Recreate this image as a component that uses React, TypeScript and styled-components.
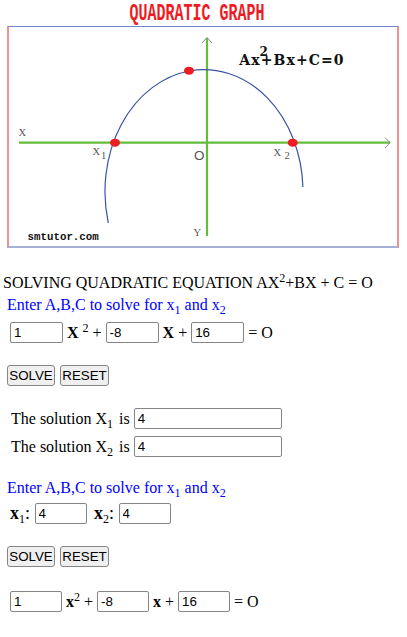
import React, { FC } from "react";
import styled, { createGlobalStyle } from "styled-components";

const GlobalStyle = createGlobalStyle`
  html, body {
    margin: 0;
    padding: 0;
    background: #fff;
  }
  body {
    font-family: "Liberation Serif", "Times New Roman", serif;
    font-size: 16px;
    color: #000;
  }
`;

const Page = styled.div`
  width: 407px;
  display: flex;
  flex-direction: column;
  align-items: flex-start;
`;

const Title = styled.div`
  width: 394px;
  height: 26px;
  display: flex;
  justify-content: center;
  align-items: center;
  font-family: "Liberation Mono", "Courier New", monospace;
  font-weight: bold;
  font-size: 15px;
  color: #ee1c24;
  span {
    display: inline-block;
    line-height: 9px;
    transform: translateY(0.5px) scale(1, 1.6);
    transform-origin: center center;
  }
`;

const GraphFrame = styled.div`
  margin-left: 7px;
  width: 392px;
  height: 222px;
  box-sizing: border-box;
  border-top: 1px solid #6f87c9;
  border-bottom: 2px solid #a3b1d6;
  border-left: 2px solid #f39090;
  border-right: 2px solid #f39090;
  svg {
    display: block;
  }
`;

const Heading = styled.div<{ $top: number }>`
  margin-top: ${(p) => p.$top}px;
  padding-left: 3px;
  line-height: 20px;
  white-space: nowrap;
`;

const Prompt = styled.div<{ $top: number }>`
  margin-top: ${(p) => p.$top}px;
  padding-left: 7px;
  line-height: 20px;
  color: #0000ff;
  white-space: nowrap;
`;

const Row = styled.div<{ $top: number; $left: number; $size?: number }>`
  margin-top: ${(p) => p.$top}px;
  padding-left: ${(p) => p.$left}px;
  height: 21px;
  line-height: 21px;
  font-size: ${(p) => p.$size ?? 16}px;
  white-space: nowrap;
`;

const Sup = styled.sup`
  font-size: 12px;
  line-height: 0;
  vertical-align: 6px;
`;

const Sub = styled.sub<{ $after?: number }>`
  font-size: 12px;
  line-height: 0;
  vertical-align: -4px;
  margin-right: ${(p) => p.$after ?? 0}px;
`;

const Var = styled.b<{ $before?: number }>`
  margin-left: ${(p) => p.$before ?? 0}px;
`;

const Field = styled.input<{ $w: number }>`
  width: ${(p) => p.$w}px;
  height: 21px;
  box-sizing: border-box;
  margin: 0;
  padding: 0 3px;
  vertical-align: top;
  border: 1px solid #858585;
  border-radius: 2px;
  font-family: "Liberation Sans", Arial, sans-serif;
  font-size: 13.33px;
  color: #000;
  background: #fff;
`;

const Buttons = styled.div<{ $top: number }>`
  margin-top: ${(p) => p.$top}px;
  padding-left: 7px;
  display: flex;
  gap: 5px;
`;

const Button = styled.button<{ $w: number }>`
  width: ${(p) => p.$w}px;
  height: 21px;
  padding: 0;
  margin: 0;
  box-sizing: border-box;
  border: 1px solid #858585;
  border-radius: 3px;
  background: #efefef;
  font-family: "Liberation Sans", Arial, sans-serif;
  font-size: 13.33px;
  color: #000;
`;

const Graph: FC = () => (
  <svg width={388} height={219} viewBox="9 27 388 219">
    <line x1={19} y1={142.7} x2={390} y2={142.7} stroke="#64bc3c" strokeWidth={2.2} />
    <line x1={207} y1={38} x2={207} y2={236} stroke="#64bc3c" strokeWidth={2.2} />
    <polyline points="385,137.5 390,142.7 385,148" fill="none" stroke="#8a8a8a" strokeWidth={1} />
    <polyline points="202,43 207,37.5 212,43" fill="none" stroke="#8a8a8a" strokeWidth={1} />
    <path d="M108.3 223 A99 122 0 1 1 302.9 187" fill="none" stroke="#3853a4" strokeWidth={1.2} />
    <ellipse cx={189} cy={70.7} rx={5} ry={4} fill="#ee1c24" />
    <ellipse cx={115} cy={142.7} rx={5} ry={4} fill="#ee1c24" />
    <ellipse cx={292.7} cy={142.7} rx={5} ry={4} fill="#ee1c24" />
    <g fontFamily="'Liberation Serif', serif" fontSize={10.5} fill="#555">
      <text x={18.5} y={136}>X</text>
      <text x={92.5} y={154.5}>X</text>
      <text x={101} y={158.5}>1</text>
      <text x={273.5} y={155.5}>X</text>
      <text x={284.5} y={159}>2</text>
      <text x={193.5} y={235.5}>Y</text>
    </g>
    <text x={194} y={159.5} fontFamily="'Liberation Sans', Arial, sans-serif" fontSize={13.5} fill="#555">O</text>
    <text x={27.5} y={240} fontFamily="'Liberation Mono', monospace" fontWeight="bold" fontSize={10.8} fill="#111">smtutor.com</text>
    <g fontFamily="'DejaVu Serif', serif" fontWeight="bold" fill="#111">
      <text x={239.3} y={64.7} fontSize={14} letterSpacing={1.1}>Ax+Bx+C=0</text>
      <text x={259.5} y={55.5} fontSize={12}>2</text>
    </g>
  </svg>
);

const App: FC = () => (
  <Page>
    <GlobalStyle />
    <Title>
      <span>QUADRATIC GRAPH</span>
    </Title>
    <GraphFrame>
      <Graph />
    </GraphFrame>

    <Heading $top={24.6}>
      SOLVING QUADRATIC EQUATION AX<Sup>2</Sup>+BX + C = O
    </Heading>
    <Prompt $top={2}>
      Enter A,B,C to solve for x<Sub>1</Sub> and x<Sub>2</Sub>
    </Prompt>
    <Row $top={7.4} $left={10}>
      <Field $w={53} defaultValue="1" /> <b>X</b> <Sup>2</Sup> +{" "}
      <Field $w={53} defaultValue="-8" /> <b>X</b> +{" "}
      <Field $w={53} defaultValue="16" />
      {" "}= O
    </Row>
    <Buttons $top={22}>
      <Button $w={48}>SOLVE</Button>
      <Button $w={49}>RESET</Button>
    </Buttons>
    <Row $top={22} $left={11}>
      The solution X<Sub $after={2}>1</Sub> is <Field $w={148} defaultValue="4" />
    </Row>
    <Row $top={7} $left={11}>
      The solution X<Sub $after={2}>2</Sub> is <Field $w={148} defaultValue="4" />
    </Row>

    <Prompt $top={21}>
      Enter A,B,C to solve for x<Sub>1</Sub> and x<Sub>2</Sub>
    </Prompt>
    <Row $top={5.3} $left={10} $size={18}>
      <Var>x</Var>
      <Sub>1</Sub>: <Field $w={52} defaultValue="4" /> <Var $before={3}>x</Var>
      <Sub>2</Sub>: <Field $w={52} defaultValue="4" />
    </Row>
    <Buttons $top={22}>
      <Button $w={48}>SOLVE</Button>
      <Button $w={49}>RESET</Button>
    </Buttons>
    <Row $top={24} $left={10}>
      <Field $w={52} defaultValue="1" /> <b>x</b>
      <Sup>2</Sup> + <Field $w={52} defaultValue="-8" /> <b>x</b> +{" "}
      <Field $w={52} defaultValue="16" /> = O
    </Row>
  </Page>
);

export default App;
